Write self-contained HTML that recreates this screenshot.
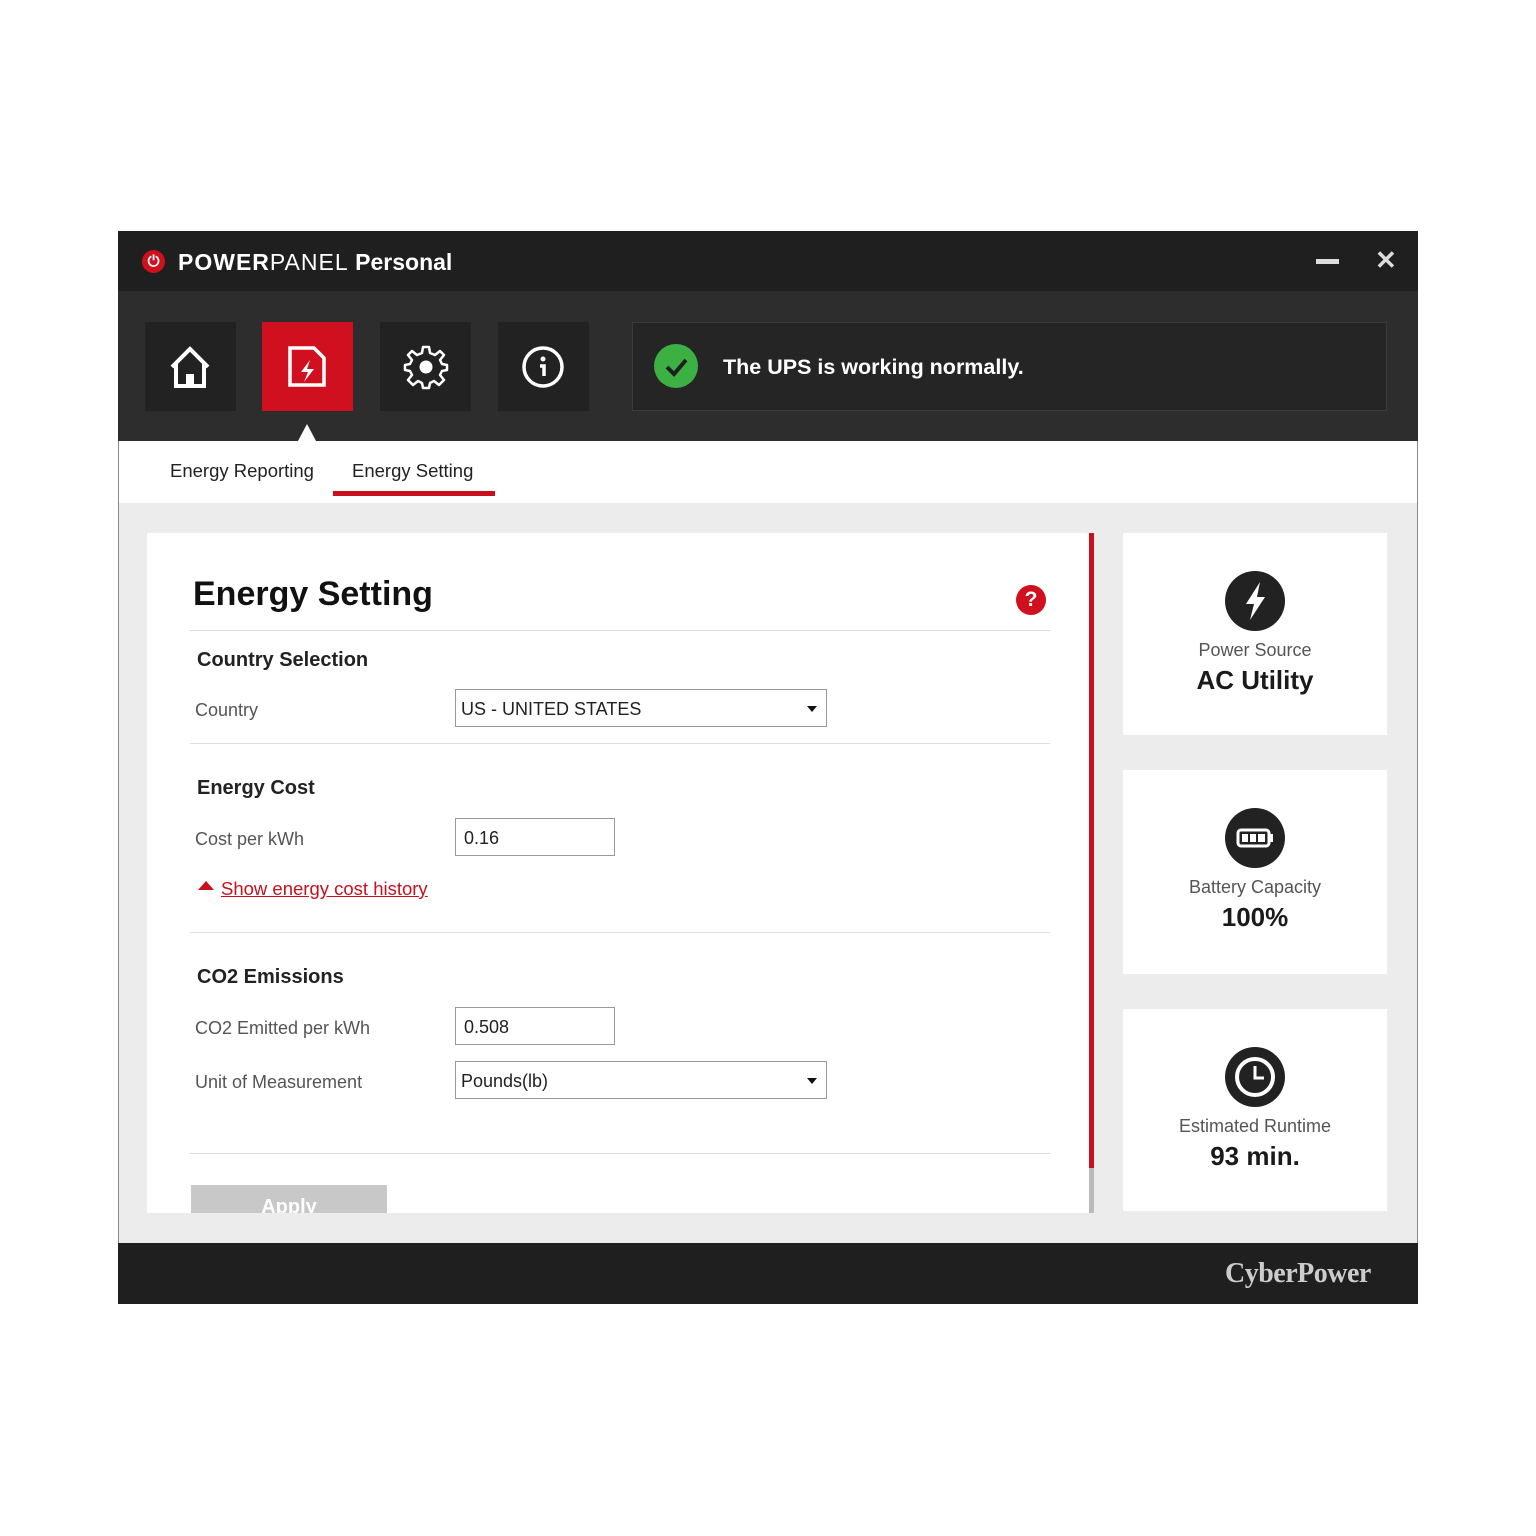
<!DOCTYPE html>
<html><head><style>
*{margin:0;padding:0;box-sizing:border-box}
body{width:1536px;height:1536px;background:#fff;position:relative;font-family:"Liberation Sans",sans-serif;overflow:hidden}
.a{position:absolute}
.btn{position:absolute;top:322px;width:91px;height:89px;background:#222}
.lbl{position:absolute;font-size:18px;color:#555}
.hd{position:absolute;font-size:20px;font-weight:bold;color:#222}
.inp{position:absolute;border:1px solid #999;background:#fff;font-size:18px;color:#222;padding-left:8px;line-height:38px;height:38px}
.line{position:absolute;left:190px;width:860px;height:1px;background:#ddd}
.card{position:absolute;left:1123px;width:264px;background:#fff;text-align:center}
.card .ic{width:60px;height:60px;border-radius:50%;background:#222;margin:38px auto 0;display:flex;align-items:center;justify-content:center}
.card .t{font-size:18px;color:#555;margin-top:9px}
.card .v{font-size:26px;font-weight:bold;color:#1a1a1a;margin-top:4px}
</style></head><body>
<div class="a" style="left:118px;top:231px;width:1300px;height:1073px;background:#ececec;border:1px solid #888"></div>
<div class="a" style="left:118px;top:231px;width:1300px;height:60px;background:#1f1f1f"></div>
<div class="a" style="left:142px;top:250px;width:23px;height:23px;border-radius:50%;background:#d0101e;color:#fff;font-size:15px;font-weight:bold;text-align:center;line-height:23px">⏻</div>
<div class="a" style="left:178px;top:249px;color:#fff;font-size:23px;letter-spacing:1px"><b>POWER</b>PANEL <b style="letter-spacing:0">Personal</b></div>
<div class="a" style="left:1316px;top:259px;width:23px;height:5px;background:#ddd"></div>
<div class="a" style="left:1375px;top:245px;color:#ddd;font-size:26px;font-weight:bold">✕</div>
<div class="a" style="left:118px;top:291px;width:1300px;height:150px;background:#2d2d2d"></div>
<div class="btn" style="left:145px"><svg width="91" height="89" viewBox="0 0 91 89"><path d="M27 45 L45 27 L63 45 M31 41 V64 H59 V41" fill="none" stroke="#fff" stroke-width="4"/><rect x="41" y="52" width="8" height="12" fill="#fff"/></svg></div>
<div class="btn" style="left:262px;background:#d0101e"><svg width="91" height="89" viewBox="0 0 91 89"><path d="M28 26 H52 L62 36 V63 H28 Z" fill="none" stroke="#fff" stroke-width="3.5"/><path d="M48 38 L39 50 H46 L42 60 L52 47 H45 Z" fill="#fff"/></svg></div>
<div class="a" style="left:298px;top:424px;border-left:9px solid transparent;border-right:9px solid transparent;border-bottom:17px solid #fff"></div>
<div class="btn" style="left:380px"><svg width="91" height="89" viewBox="0 0 91 89"><g transform="translate(46 45)"><path d="M-3 -20 H3 L4 -14 L9 -12 L14 -16 L18 -12 L14 -7 L16 -3 L21 -2 V3 L16 4 L14 8 L18 13 L13 18 L8 14 L4 16 L3 21 H-3 L-4 16 L-8 14 L-13 18 L-18 13 L-14 8 L-16 4 L-21 3 V-2 L-16 -3 L-14 -7 L-18 -12 L-14 -16 L-9 -12 L-4 -14 Z" fill="none" stroke="#fff" stroke-width="2.5" stroke-linejoin="round"/><circle r="6.5" fill="#fff"/></g></svg></div>
<div class="btn" style="left:498px"><svg width="91" height="89" viewBox="0 0 91 89"><circle cx="45" cy="45" r="19" fill="none" stroke="#fff" stroke-width="3.5"/><circle cx="45" cy="37" r="2.5" fill="#fff"/><path d="M42 44 H46 V54" fill="none" stroke="#fff" stroke-width="3.5"/></svg></div>
<div class="a" style="left:632px;top:322px;width:755px;height:89px;background:#252525;border:1px solid #3a3a3a"></div>
<div class="a" style="left:654px;top:344px;width:44px;height:44px;border-radius:50%;background:#3cb043"><svg width="44" height="44"><path d="M13 23 L20 30 L32 16" fill="none" stroke="#1f1f1f" stroke-width="4"/></svg></div>
<div class="a" style="left:723px;top:355px;color:#fff;font-size:21.5px;font-weight:bold">The UPS is working normally.</div>
<div class="a" style="left:119px;top:441px;width:1298px;height:62px;background:#fff"></div>
<div class="a" style="left:170px;top:460px;font-size:18.5px;color:#222">Energy Reporting</div>
<div class="a" style="left:352px;top:460px;font-size:18.5px;color:#222">Energy Setting</div>
<div class="a" style="left:333px;top:491px;width:162px;height:5px;background:#c8101e"></div>
<div class="a" style="left:147px;top:533px;width:943px;height:680px;background:#fff;overflow:hidden">
<div class="a" style="left:44px;top:652px;width:196px;height:40px;background:#c8c8c8;color:#fff;font-size:20px;font-weight:bold;text-align:center;line-height:44px">Apply</div>
</div>
<div class="a" style="left:1089px;top:533px;width:5px;height:635px;background:#c8101e"></div>
<div class="a" style="left:1089px;top:1168px;width:5px;height:45px;background:#bbb"></div>
<div class="a" style="left:193px;top:575px;font-size:34px;font-weight:bold;color:#111">Energy Setting</div>
<div class="a" style="left:1016px;top:585px;width:30px;height:30px;border-radius:50%;background:#d0101e;color:#fff;font-weight:bold;font-size:21px;text-align:center;line-height:30px">?</div>
<div class="line" style="top:630px"></div>
<div class="hd" style="left:197px;top:649px">Country Selection</div>
<div class="lbl" style="left:195px;top:700px">Country</div>
<div class="inp" style="left:455px;top:689px;width:372px;padding-left:5px">US - UNITED STATES<span style="position:absolute;right:9px;top:16px;border-left:5px solid transparent;border-right:5px solid transparent;border-top:6px solid #111"></span></div>
<div class="line" style="top:743px"></div>
<div class="hd" style="left:197px;top:777px">Energy Cost</div>
<div class="lbl" style="left:195px;top:829px">Cost per kWh</div>
<div class="inp" style="left:455px;top:818px;width:160px">0.16</div>
<div class="a" style="left:198px;top:881px;border-left:8px solid transparent;border-right:8px solid transparent;border-bottom:9px solid #c8101e"></div>
<div class="a" style="left:221px;top:878px;font-size:18.5px;color:#c8101e;text-decoration:underline">Show energy cost history</div>
<div class="line" style="top:932px"></div>
<div class="hd" style="left:197px;top:966px">CO2 Emissions</div>
<div class="lbl" style="left:195px;top:1018px">CO2 Emitted per kWh</div>
<div class="inp" style="left:455px;top:1007px;width:160px">0.508</div>
<div class="lbl" style="left:195px;top:1072px">Unit of Measurement</div>
<div class="inp" style="left:455px;top:1061px;width:372px;padding-left:5px">Pounds(lb)<span style="position:absolute;right:9px;top:16px;border-left:5px solid transparent;border-right:5px solid transparent;border-top:6px solid #111"></span></div>
<div class="line" style="top:1153px"></div>
<div class="card" style="top:533px;height:202px"><div class="ic"><svg width="60" height="60"><path d="M35 11 L21 33 H29 L25 49 L40 26 H32 Z" fill="#fff"/></svg></div><div class="t">Power Source</div><div class="v">AC Utility</div></div>
<div class="card" style="top:770px;height:204px"><div class="ic"><svg width="60" height="60"><rect x="13" y="22" width="31" height="16" rx="3" fill="none" stroke="#fff" stroke-width="3"/><rect x="45" y="26" width="3" height="8" fill="#fff"/><rect x="17" y="26" width="6" height="8" fill="#fff"/><rect x="25" y="26" width="6" height="8" fill="#fff"/><rect x="33" y="26" width="7" height="8" fill="#fff"/></svg></div><div class="t">Battery Capacity</div><div class="v">100%</div></div>
<div class="card" style="top:1009px;height:202px"><div class="ic"><svg width="60" height="60"><circle cx="30" cy="30" r="18" fill="none" stroke="#fff" stroke-width="4"/><path d="M30 19 V31 H39" fill="none" stroke="#fff" stroke-width="3"/></svg></div><div class="t">Estimated Runtime</div><div class="v">93 min.</div></div>
<div class="a" style="left:118px;top:1243px;width:1300px;height:61px;background:#1f1f1f"></div>
<div class="a" style="left:1225px;top:1258px;color:#ccc;font-size:28px;font-weight:bold;font-family:'Liberation Serif',serif;letter-spacing:-0.5px">CyberPower</div>
</body></html>
